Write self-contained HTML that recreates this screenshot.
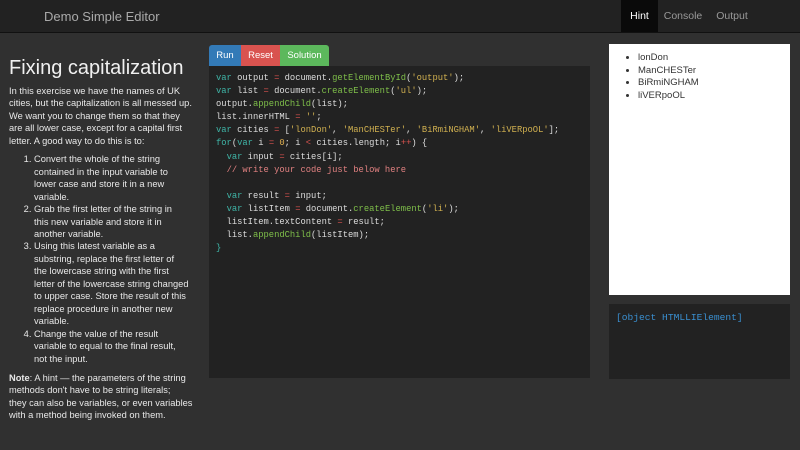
<!DOCTYPE html>
<html><head><style>
body{margin:0;width:800px;height:450px;background:#303030;font-family:"Liberation Sans",sans-serif;color:#e8e8e8;position:relative;overflow:hidden}
.nav{position:absolute;left:0;top:0;width:800px;height:32px;background:#222;border-bottom:1px solid #111}
.brand{position:absolute;left:44px;top:9px;font-size:13px;color:#aaa}
.tab{position:absolute;top:0;height:32px;line-height:32px;font-size:10.5px;color:#999;text-align:center}
h1{position:absolute;left:9px;top:57px;margin:0;font-weight:normal;font-size:20px;color:#f0f0f0}
.txt{position:absolute;left:9px;top:85px;width:200px;font-size:9.3px;line-height:12.45px;white-space:nowrap}
.txt ol{margin:6px 0 7px;padding-left:25px}
.txt p{margin:0}
.btn{position:absolute;top:45px;height:21px;line-height:21px;font-size:9.5px;color:#fff;text-align:center}
.ed{position:absolute;left:209px;top:66px;width:381px;height:312px;background:#222}
pre{margin:0;position:absolute;left:7px;top:6px;font-family:"Liberation Mono",monospace;font-size:8.8px;line-height:13.1px;color:#ddd}
.k{color:#3fb6a8}.f{color:#7fbf4a}.s{color:#d0b050}.o{color:#d9534f}.c{color:#e08080}.n{color:#e0b050}
.out{position:absolute;left:609px;top:44px;width:181px;height:251px;background:#fff;color:#333;font-size:9.5px;line-height:12.5px}
.out ul{margin:8px 0 0;padding-left:29px}
.con{position:absolute;left:609px;top:304px;width:181px;height:75px;background:#222;font-family:"Liberation Mono",monospace;font-size:9.6px;color:#3a8fd0}
</style></head><body>
<div class="nav"><div class="brand">Demo Simple Editor</div>
<div class="tab" style="left:621px;width:37px;background:#0a0a0a;color:#fff">Hint</div>
<div class="tab" style="left:658px;width:50px">Console</div>
<div class="tab" style="left:708px;width:48px">Output</div></div>
<h1>Fixing capitalization</h1>
<div class="txt"><p>In this exercise we have the names of UK<br>cities, but the capitalization is all messed up.<br>We want you to change them so that they<br>are all lower case, except for a capital first<br>letter. A good way to do this is to:</p>
<ol><li>Convert the whole of the string<br>contained in the input variable to<br>lower case and store it in a new<br>variable.</li>
<li>Grab the first letter of the string in<br>this new variable and store it in<br>another variable.</li>
<li>Using this latest variable as a<br>substring, replace the first letter of<br>the lowercase string with the first<br>letter of the lowercase string changed<br>to upper case. Store the result of this<br>replace procedure in another new<br>variable.</li>
<li>Change the value of the result<br>variable to equal to the final result,<br>not the input.</li></ol>
<p><b>Note</b>: A hint — the parameters of the string<br>methods don't have to be string literals;<br>they can also be variables, or even variables<br>with a method being invoked on them.</p></div>
<div class="btn" style="left:209px;width:32px;background:#337ab7;border-radius:3px 0 0 0">Run</div>
<div class="btn" style="left:241px;width:39px;background:#d9534f">Reset</div>
<div class="btn" style="left:280px;width:49px;background:#5cb85c;border-radius:0 3px 0 0">Solution</div>
<div class="ed"><pre><span class="k">var</span> output <span class="o">=</span> document.<span class="f">getElementById</span>(<span class="s">'output'</span>);
<span class="k">var</span> list <span class="o">=</span> document.<span class="f">createElement</span>(<span class="s">'ul'</span>);
output.<span class="f">appendChild</span>(list);
list.innerHTML <span class="o">=</span> <span class="s">''</span>;
<span class="k">var</span> cities <span class="o">=</span> [<span class="s">'lonDon'</span>, <span class="s">'ManCHESTer'</span>, <span class="s">'BiRmiNGHAM'</span>, <span class="s">'liVERpoOL'</span>];
<span class="k">for</span>(<span class="k">var</span> i <span class="o">=</span> <span class="n">0</span>; i <span class="o">&lt;</span> cities.length; i<span class="o">++</span>) {
  <span class="k">var</span> input <span class="o">=</span> cities[i];
  <span class="c">// write your code just below here</span>

  <span class="k">var</span> result <span class="o">=</span> input;
  <span class="k">var</span> listItem <span class="o">=</span> document.<span class="f">createElement</span>(<span class="s">'li'</span>);
  listItem.textContent <span class="o">=</span> result;
  list.<span class="f">appendChild</span>(listItem);
<span class="k">}</span></pre></div>
<div class="out"><ul><li>lonDon</li><li>ManCHESTer</li><li>BiRmiNGHAM</li><li>liVERpoOL</li></ul></div>
<div class="con"><div style="position:absolute;left:7px;top:8px">[object HTMLLIElement]</div></div>
</body></html>
